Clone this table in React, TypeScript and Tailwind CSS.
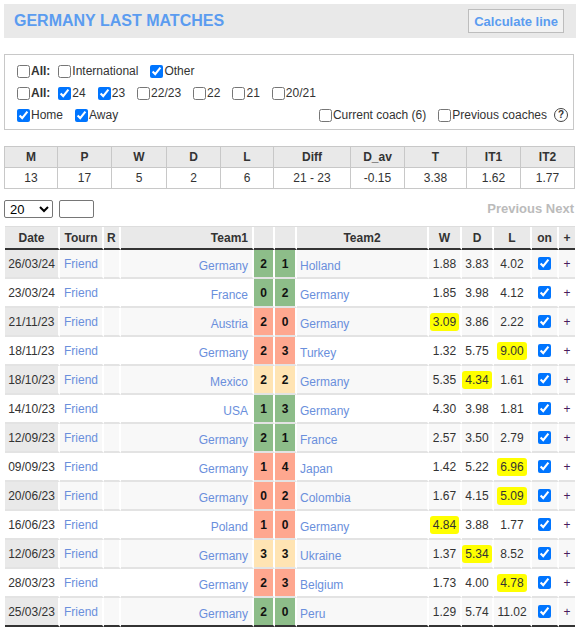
import React from "react";

type Row = {
  date: string;
  t1: string;
  s1: number;
  s2: number;
  t2: string;
  w: string;
  d: string;
  l: string;
  res: "W" | "L" | "D";
  hl?: "w" | "d" | "l";
};

const rows: Row[] = [
  { date: "26/03/24", t1: "Germany", s1: 2, s2: 1, t2: "Holland", w: "1.88", d: "3.83", l: "4.02", res: "W" },
  { date: "23/03/24", t1: "France", s1: 0, s2: 2, t2: "Germany", w: "1.85", d: "3.98", l: "4.12", res: "W" },
  { date: "21/11/23", t1: "Austria", s1: 2, s2: 0, t2: "Germany", w: "3.09", d: "3.86", l: "2.22", res: "L", hl: "w" },
  { date: "18/11/23", t1: "Germany", s1: 2, s2: 3, t2: "Turkey", w: "1.32", d: "5.75", l: "9.00", res: "L", hl: "l" },
  { date: "18/10/23", t1: "Mexico", s1: 2, s2: 2, t2: "Germany", w: "5.35", d: "4.34", l: "1.61", res: "D", hl: "d" },
  { date: "14/10/23", t1: "USA", s1: 1, s2: 3, t2: "Germany", w: "4.30", d: "3.98", l: "1.81", res: "W" },
  { date: "12/09/23", t1: "Germany", s1: 2, s2: 1, t2: "France", w: "2.57", d: "3.50", l: "2.79", res: "W" },
  { date: "09/09/23", t1: "Germany", s1: 1, s2: 4, t2: "Japan", w: "1.42", d: "5.22", l: "6.96", res: "L", hl: "l" },
  { date: "20/06/23", t1: "Germany", s1: 0, s2: 2, t2: "Colombia", w: "1.67", d: "4.15", l: "5.09", res: "L", hl: "l" },
  { date: "16/06/23", t1: "Poland", s1: 1, s2: 0, t2: "Germany", w: "4.84", d: "3.88", l: "1.77", res: "L", hl: "w" },
  { date: "12/06/23", t1: "Germany", s1: 3, s2: 3, t2: "Ukraine", w: "1.37", d: "5.34", l: "8.52", res: "D", hl: "d" },
  { date: "28/03/23", t1: "Germany", s1: 2, s2: 3, t2: "Belgium", w: "1.73", d: "4.00", l: "4.78", res: "L", hl: "l" },
  { date: "25/03/23", t1: "Germany", s1: 2, s2: 0, t2: "Peru", w: "1.29", d: "5.74", l: "11.02", res: "W" },
];

function Cb({ checked }: { checked?: boolean }) {
  return (
    <input
      type="checkbox"
      defaultChecked={checked}
      className="w-[13px] h-[13px] m-0 shrink-0"
    />
  );
}

function Item({ checked, label, bold, last }: { checked?: boolean; label: string; bold?: boolean; last?: boolean }) {
  return (
    <label className={`flex items-center ${bold ? "mr-[8px]" : last ? "" : "mr-[12px]"}`}>
      <Cb checked={checked} />
      <span className={`ml-[1px] ${bold ? "font-bold" : ""}`}>{label}</span>
    </label>
  );
}

function Odd({ v, hl }: { v: string; hl: boolean }) {
  if (!hl) return <span>{v}</span>;
  return <span className="bg-[#ffff00] px-[3px] py-[2px] rounded-[3px]">{v}</span>;
}

export default function App() {
  const statsHead = ["M", "P", "W", "D", "L", "Diff", "D_av", "T", "IT1", "IT2"];
  const statsVal = ["13", "17", "5", "2", "6", "21 - 23", "-0.15", "3.38", "1.62", "1.77"];
  const statsW = ["w-[53px]", "w-[54px]", "w-[55px]", "w-[54px]", "w-[53px]", "w-[77px]", "w-[54px]", "w-[62px]", "w-[54px]", "w-[54px]"];

  const scoreBg = (r: Row["res"]) =>
    r === "W" ? "bg-[#8dbd89]" : r === "L" ? "bg-[#fea78f]" : "bg-[#ffe4b3]";

  const th = "bg-[#e9e9e9] border-r-2 border-white border-b-2 border-b-[#333] font-bold";

  return (
    <div className="w-[580px] bg-white pt-[4px] pl-[4px] font-['Liberation_Sans',Arial,sans-serif] text-[12px] text-[#333]">
      {/* Title bar */}
      <div className="w-[572px] h-[34px] bg-[#e9e9e9] flex items-center justify-between pl-[10px] pr-[12px]">
        <h1 className="text-[16px] font-bold text-[#5b9cf0] leading-none">GERMANY LAST MATCHES</h1>
        <button className="h-[24px] px-[5px] border border-[#bdbdbd] bg-[#f2f2f2] text-[13px] font-bold text-[#5b9cf0] leading-none">
          Calculate line
        </button>
      </div>

      {/* Filters */}
      <div className="mt-[16px] w-[570px] h-[76px] border border-[#c8c8c8] pl-[12px] pr-[5px] pt-[5px] flex flex-col">
        <div className="h-[22px] flex items-center">
          <Item label="All:" bold />
          <Item label="International" />
          <Item label="Other" checked />
        </div>
        <div className="h-[22px] flex items-center">
          <Item label="All:" bold />
          <Item label="24" checked />
          <Item label="23" checked />
          <Item label="22/23" />
          <Item label="22" />
          <Item label="21" />
          <Item label="20/21" />
        </div>
        <div className="h-[22px] flex items-center">
          <Item label="Home" checked />
          <Item label="Away" checked />
          <div className="ml-auto flex items-center">
            <Item label="Current coach (6)" />
            <Item label="Previous coaches" last />
            <span className="ml-[7px] w-[14px] h-[14px] rounded-full border-[1.5px] border-[#444] flex items-center justify-center text-[10px] font-bold text-[#333] leading-none">
              ?
            </span>
          </div>
        </div>
      </div>

      {/* Stats */}
      <table className="mt-[16px] w-[570px] table-fixed border-collapse text-center">
        <thead>
          <tr className="h-[21px] bg-[#e9e9e9]">
            {statsHead.map((h, i) => (
              <th key={h} className={`${statsW[i]} border border-[#c8c8c8] font-bold`}>
                {h}
              </th>
            ))}
          </tr>
        </thead>
        <tbody>
          <tr className="h-[21px]">
            {statsVal.map((v, i) => (
              <td key={i} className="border border-[#c8c8c8]">
                {v}
              </td>
            ))}
          </tr>
        </tbody>
      </table>

      {/* Controls */}
      <div className="mt-[11px] w-[570px] h-[18px] flex items-center">
        <select className="w-[49px] h-[18px] border border-[#767676] rounded-[2px] text-[13px] text-black pl-[1px]" defaultValue="20">
          <option>20</option>
          <option>50</option>
        </select>
        <input type="text" className="ml-[6px] w-[35px] h-[18px] border border-[#767676] rounded-[2px]" />
        <div className="ml-auto text-[13px] font-bold text-[#bbbbbb]">Previous Next</div>
      </div>

      {/* Matches */}
      <table className="mt-[8px] ml-[1px] w-[570px] table-fixed border-separate border-spacing-0 border-t border-[#dddddd]">
        <thead>
          <tr className="h-[23px]">
            <th className={`w-[55px] ${th} text-center`}>Date</th>
            <th className={`w-[44px] ${th} text-center`}>Tourn</th>
            <th className={`w-[17px] ${th} text-left pl-[3px]`}>R</th>
            <th className={`w-[133px] ${th} text-right pr-[4px]`}>Team1</th>
            <th className={`w-[21px] ${th}`}></th>
            <th className={`w-[22px] ${th}`}></th>
            <th className={`w-[132px] ${th} text-center`}>Team2</th>
            <th className={`w-[33px] ${th} text-center`}>W</th>
            <th className={`w-[32px] ${th} text-center`}>D</th>
            <th className={`w-[38px] ${th} text-center`}>L</th>
            <th className={`w-[27px] ${th} text-center`}>on</th>
            <th className="w-[16px] bg-[#e9e9e9] border-b-2 border-b-[#333] font-bold text-center">+</th>
          </tr>
        </thead>
        <tbody>
          {rows.map((r, i) => {
            const odd = i % 2 === 0;
            const lastRow = i === rows.length - 1;
            const bb = lastRow ? "border-b-2 border-b-[#333]" : "border-b-2 border-b-[#e3e3e3]";
            const bg = odd ? "bg-[#f8f8f8]" : "bg-white";
            const cell = `${bb} border-r-2 border-r-white`;
            return (
              <tr key={i} className="h-[29px]">
                <td className={`${cell} ${odd ? "bg-[#e9e9e9]" : "bg-white"} text-center`}>{r.date}</td>
                <td className={`${cell} ${bg} text-center text-[#6a8fdc]`}>Friend</td>
                <td className={`${cell} ${bg}`}></td>
                <td className={`${cell} ${bg} text-right pr-[4px] pt-[5px] text-[#6a8fdc]`}>{r.t1}</td>
                <td className={`${cell} ${scoreBg(r.res)} text-center font-bold text-[#111]`}>{r.s1}</td>
                <td className={`${cell} ${scoreBg(r.res)} text-center font-bold text-[#111]`}>{r.s2}</td>
                <td className={`${cell} ${bg} text-left pl-[3px] pt-[5px] text-[#6a8fdc]`}>{r.t2}</td>
                <td className={`${cell} ${bg} text-center`}><Odd v={r.w} hl={r.hl === "w"} /></td>
                <td className={`${cell} ${bg} text-center`}><Odd v={r.d} hl={r.hl === "d"} /></td>
                <td className={`${cell} ${bg} text-center`}><Odd v={r.l} hl={r.hl === "l"} /></td>
                <td className={`${cell} ${bg} text-center`}>
                  <div className="flex justify-center"><Cb checked /></div>
                </td>
                <td className={`${bb} ${bg} text-center text-[#4a1a5e]`}>+</td>
              </tr>
            );
          })}
        </tbody>
      </table>
    </div>
  );
}
